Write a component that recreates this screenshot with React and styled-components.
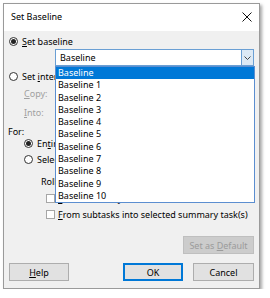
import React from 'react';
import styled, { createGlobalStyle } from 'styled-components';

const GlobalStyle = createGlobalStyle`
  html, body {
    margin: 0;
    background: #ffffff;
  }
  body {
    font-family: "Noto Sans", "Open Sans", sans-serif;
    font-size: 9px;
    color: #000000;
  }
`;

// dialog frame
const Dialog = styled.div`
  position: relative;
  margin: 3px 0 0 3px;
  width: 255px;
  border: 1px solid #9a9a9a;
  background: #f0f0f0;
  box-shadow: 2px 2px 3px rgba(0, 0, 0, 0.35);
`;

const TitleBar = styled.div`
  height: 27px;
  box-sizing: border-box;
  padding: 0 7px 2px 7px;
  background: #ffffff;
  display: flex;
  align-items: center;
  justify-content: space-between;
  font-size: 9px;
`;

const Body = styled.div`
  padding: 0 5px 7px 4px;
  display: flex;
  flex-direction: column;
`;

const Row = styled.div`
  display: flex;
  align-items: center;
  height: ${p => p.$h || 12}px;
  margin-top: ${p => p.$top || 0}px;
  padding-left: ${p => p.$indent || 0}px;
  white-space: nowrap;
  color: ${p => (p.$disabled ? '#a0a0a0' : '#000000')};
`;

const Key = styled.span`
  text-decoration: underline;
  text-underline-offset: 1px;
`;

// radio + checkbox
const Radio = styled.span`
  flex: none;
  position: relative;
  width: 9px;
  height: 9px;
  box-sizing: border-box;
  border: 1px solid #333333;
  border-radius: 50%;
  background: #ffffff;
  margin-left: ${p => p.$left || 0}px;
  margin-right: 4px;

  &::after {
    content: '';
    display: ${p => (p.$checked ? 'block' : 'none')};
    position: absolute;
    left: 1px;
    top: 1px;
    width: 5px;
    height: 5px;
    border-radius: 50%;
    background: #222222;
  }
`;

const Check = styled.span`
  flex: none;
  width: 9px;
  height: 9px;
  box-sizing: border-box;
  border: 1px solid #a6a6a6;
  background: #ffffff;
  margin-right: 3px;
`;

const FieldLabel = styled.span`
  width: 31px;
  flex: none;
`;

// combobox
const ComboWrap = styled.div`
  position: relative;
  margin-left: ${p => p.$left || 0}px;
  flex: 1;
  height: 17px;
`;

const Combo = styled.div`
  height: 100%;
  box-sizing: border-box;
  border: 1px solid ${p => (p.$open ? '#6a9fd4' : '#bcbcbc')};
  background: ${p => (p.$open ? '#ffffff' : '#f0f0f0')};
  display: flex;
  align-items: center;
  padding-left: 4px;
`;

const ComboText = styled.span`
  flex: 1;
  color: #000000;
`;

const DropButton = styled.span`
  width: 12px;
  height: 100%;
  box-sizing: border-box;
  border-left: 1px solid ${p => (p.$open ? '#6a9fd4' : 'transparent')};
  background: ${p => (p.$open ? '#dce9f5' : 'transparent')};
  display: flex;
  align-items: center;
  justify-content: center;
`;

const List = styled.ul`
  position: absolute;
  z-index: 5;
  top: 100%;
  left: 0;
  right: -1px;
  margin: 0;
  padding: 0;
  list-style: none;
  background: #ffffff;
  border: 1px solid #5b8ed0;
`;

const Item = styled.li`
  height: 12.3px;
  line-height: 12.3px;
  padding-left: 2px;
  background: ${p => (p.$selected ? '#0078d7' : 'transparent')};
  color: ${p => (p.$selected ? '#ffffff' : '#000000')};
`;

// buttons
const ButtonRow = styled.div`
  display: flex;
  justify-content: ${p => p.$justify || 'flex-start'};
  gap: 10px;
  margin-top: ${p => p.$top || 0}px;
  padding-left: ${p => p.$indent || 0}px;
`;

const Button = styled.button`
  width: ${p => p.$w || 60}px;
  height: 18px;
  padding: 0;
  font: inherit;
  box-sizing: border-box;
  background: ${p => (p.disabled ? '#cccccc' : '#e1e1e1')};
  color: ${p => (p.disabled ? '#9b9b9b' : '#000000')};
  border: 1px solid ${p => (p.$default ? '#0078d7' : p.disabled ? '#bfbfbf' : '#adadad')};
  box-shadow: ${p => (p.$default ? 'inset 0 0 0 1px #0078d7' : 'none')};
  margin-left: ${p => (p.$push ? 'auto' : '0')};
`;

const Chevron = () => (
  <svg width="7" height="4" viewBox="0 0 7 4">
    <polyline points="0.5,0.5 3.5,3.5 6.5,0.5" fill="none" stroke="#444" strokeWidth="1" />
  </svg>
);

const CloseIcon = () => (
  <svg width="10" height="10" viewBox="0 0 10 10">
    <path d="M0.5 0.5 L9.5 9.5 M9.5 0.5 L0.5 9.5" stroke="#111" strokeWidth="1" />
  </svg>
);

const baselines = ['Baseline', ...Array.from({ length: 10 }, (_, i) => `Baseline ${i + 1}`)];

export default function App() {
  return (
    <>
      <GlobalStyle />
      <Dialog>
        <TitleBar>
          <span>Set Baseline</span>
          <CloseIcon />
        </TitleBar>

        <Body>
          <Row $top={4}>
            <Radio $checked $left={1} />
            <span><Key>S</Key>et baseline</span>
          </Row>
          <Row $top={2} $h={17}>
            <ComboWrap $left={47}>
              <Combo $open>
                <ComboText>Baseline</ComboText>
                <DropButton $open><Chevron /></DropButton>
              </Combo>
              <List>
                {baselines.map((b, i) => (
                  <Item key={b} $selected={i === 0}>{b}</Item>
                ))}
              </List>
            </ComboWrap>
          </Row>

          <Row $top={4}>
            <Radio $left={1} />
            <span>Set <Key>i</Key>nterim plan</span>
          </Row>
          {/* copy / into combos sit under the open list */}
          <Row $top={3} $h={17} $indent={16} $disabled>
            <FieldLabel><Key>C</Key>opy:</FieldLabel>
            <ComboWrap>
              <Combo><ComboText /><DropButton><Chevron /></DropButton></Combo>
            </ComboWrap>
          </Row>
          <Row $top={2} $h={17} $indent={16} $disabled>
            <FieldLabel><Key>I</Key>nto:</FieldLabel>
            <ComboWrap>
              <Combo><ComboText /><DropButton><Chevron /></DropButton></Combo>
            </ComboWrap>
          </Row>

          <Row $top={4}>For:</Row>
          <Row>
            <Radio $checked $left={16} />
            <span>En<Key>t</Key>ire project</span>
          </Row>
          <Row $top={4}>
            <Radio $left={16} />
            <span>Selecte<Key>d</Key> tasks</span>
          </Row>

          <Row $top={10} $indent={33}>Roll up baselines:</Row>
          <Row $top={5} $indent={38}>
            <Check />
            <span><Key>T</Key>o all summary tasks</span>
          </Row>
          <Row $top={4} $indent={38}>
            <Check />
            <span><Key>F</Key>rom subtasks into selected summary task(s)</span>
          </Row>

          <ButtonRow $top={16} $justify="flex-end">
            <Button disabled $w={71}>Set as <Key>D</Key>efault</Button>
          </ButtonRow>
          <ButtonRow $top={9} $indent={1}>
            <Button><Key>H</Key>elp</Button>
            <Button $default $push>OK</Button>
            <Button $w={61}>Cancel</Button>
          </ButtonRow>
        </Body>
      </Dialog>
    </>
  );
}
